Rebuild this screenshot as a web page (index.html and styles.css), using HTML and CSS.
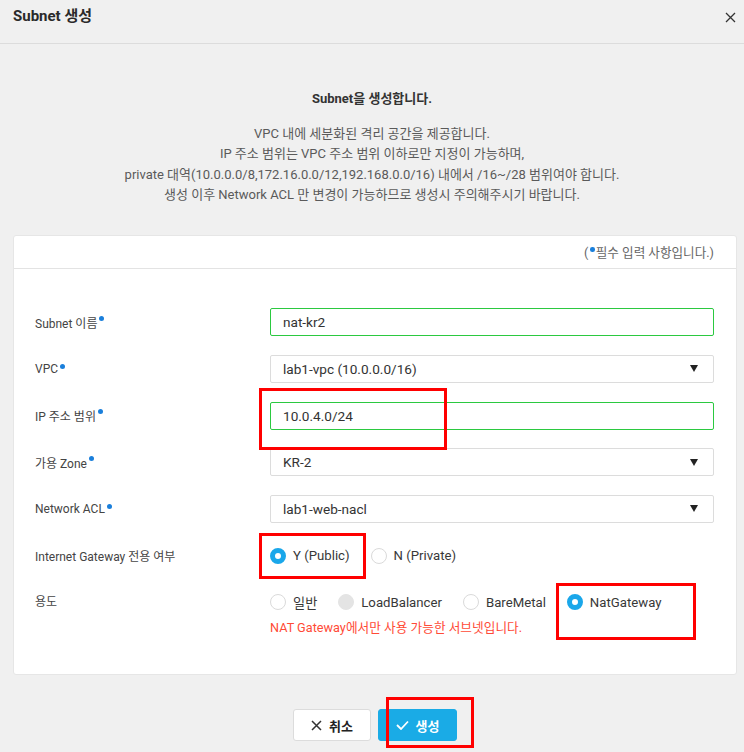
FILE: index.html
```html
<!DOCTYPE html>
<html lang="ko">
<head>
<meta charset="utf-8">
<title>Subnet 생성</title>
<link rel="stylesheet" href="styles.css">
</head>
<body>
<div class="modal">
  <div class="modal-header">
    <h1 class="modal-title">Subnet 생성</h1>
    <button class="close-btn" aria-label="닫기">
      <svg width="11" height="11" viewBox="0 0 11 11"><path d="M1 1L10 10M10 1L1 10" stroke="#333" stroke-width="1.3" fill="none"/></svg>
    </button>
  </div>

  <div class="intro">
    <p class="intro-title">Subnet을 생성합니다.</p>
    <p class="intro-text">VPC 내에 세분화된 격리 공간을 제공합니다.<br>IP 주소 범위는 VPC 주소 범위 이하로만 지정이 가능하며,<br>private 대역(10.0.0.0/8,172.16.0.0/12,192.168.0.0/16) 내에서 /16~/28 범위여야 합니다.<br>생성 이후 Network ACL 만 변경이 가능하므로 생성시 주의해주시기 바랍니다.</p>
  </div>

  <div class="card">
    <div class="card-header">(<span class="req-dot small"></span>필수 입력 사항입니다.)</div>
    <div class="card-body">
      <div class="row">
        <div class="label">Subnet 이름<span class="req-dot"></span></div>
        <div class="field"><div class="input valid">nat-kr2</div></div>
      </div>
      <div class="row">
        <div class="label">VPC<span class="req-dot"></span></div>
        <div class="field"><div class="input select">lab1-vpc (10.0.0.0/16)<span class="arrow"></span></div></div>
      </div>
      <div class="row">
        <div class="label">IP 주소 범위<span class="req-dot"></span></div>
        <div class="field"><div class="input valid">10.0.4.0/24</div></div>
      </div>
      <div class="row">
        <div class="label">가용 Zone<span class="req-dot"></span></div>
        <div class="field"><div class="input select">KR-2<span class="arrow"></span></div></div>
      </div>
      <div class="row">
        <div class="label">Network ACL<span class="req-dot"></span></div>
        <div class="field"><div class="input select">lab1-web-nacl<span class="arrow"></span></div></div>
      </div>
      <div class="row">
        <div class="label">Internet Gateway 전용 여부</div>
        <div class="field radios">
          <span class="opt"><span class="radio checked"></span>Y (Public)</span>
          <span class="opt"><span class="radio"></span>N (Private)</span>
        </div>
      </div>
      <div class="row top">
        <div class="label">용도</div>
        <div class="field">
          <div class="radios">
            <span class="opt"><span class="radio"></span>일반</span>
            <span class="opt"><span class="radio disabled"></span>LoadBalancer</span>
            <span class="opt"><span class="radio"></span>BareMetal</span>
            <span class="opt"><span class="radio checked"></span>NatGateway</span>
          </div>
          <p class="error">NAT Gateway에서만 사용 가능한 서브넷입니다.</p>
        </div>
      </div>
    </div>
  </div>

  <div class="actions">
    <button class="btn btn-cancel"><svg width="11" height="11" viewBox="0 0 11 11"><path d="M1 1L10 10M10 1L1 10" stroke="#333" stroke-width="1.5" fill="none"/></svg>취소</button>
    <button class="btn btn-primary"><svg width="13" height="10" viewBox="0 0 13 10"><path d="M1 5L5 9L12 1.5" stroke="#fff" stroke-width="1.8" fill="none"/></svg>생성</button>
  </div>
</div>

<div class="mark m1"></div>
<div class="mark m2"></div>
<div class="mark m3"></div>
<div class="mark m4"></div>
</body>
</html>
```

FILE: styles.css
```css
* { box-sizing: border-box; }
html, body { margin: 0; padding: 0; }
body {
  width: 744px;
  height: 752px;
  overflow: hidden;
  background: #f0f0f0;
  font-family: Roboto, "Noto Sans CJK KR", sans-serif;
  color: #333;
  position: relative;
}
.modal { display: flex; flex-direction: column; }
.modal-header {
  height: 44px;
  border-bottom: 1px solid #dcdcdc;
  display: flex;
  justify-content: space-between;
  align-items: flex-start;
  padding: 0 8px 0 13px;
}
.modal-title {
  margin: 0;
  font-size: 15px;
  font-weight: 700;
  line-height: 32px;
  color: #2a2a2a;
}
.close-btn {
  border: 0;
  background: none;
  padding: 0;
  width: 11px;
  height: 11px;
  margin: 12px 0 0;
  display: flex;
}
.intro { text-align: center; padding-top: 45px; }
.intro-title {
  margin: 0;
  font-size: 13px;
  font-weight: 700;
  line-height: 20px;
  color: #333;
}
.intro-text {
  margin: 15px 0 0;
  font-size: 13px;
  line-height: 20.3px;
  color: #5a5a5a;
}
.card {
  margin: 30px 7px 0 13px;
  background: #fff;
  border: 1px solid #e6e6e6;
  border-radius: 3px;
}
.card-header {
  height: 33px;
  border-bottom: 1px solid #e3e3e3;
  text-align: right;
  padding: 0 22px;
  font-size: 12.6px;
  line-height: 33px;
  color: #666;
}
.card-body {
  padding: 39px 22px 36px 21px;
  display: flex;
  flex-direction: column;
  gap: 18.7px;
}
.row { display: flex; align-items: center; min-height: 28px; }
.row.top { align-items: flex-start; }
.label {
  width: 235px;
  flex: none;
  font-size: 12px;
  color: #444;
}
.row.top .label { line-height: 28px; }
.req-dot {
  display: inline-block;
  width: 5px;
  height: 5px;
  border-radius: 50%;
  background: #1a7fdb;
  vertical-align: top;
  margin: 2px 0 0 2px;
}
.req-dot.small { margin: 11px 1px 0 2px; width: 4.5px; height: 4.5px; }
.field { flex: 1; }
.input {
  height: 28px;
  border: 1px solid #dcdcdc;
  border-radius: 2px;
  padding: 0 12px;
  font-size: 13.6px;
  line-height: 26px;
  color: #333;
  position: relative;
  display: flex;
  align-items: center;
}
.input.valid { border-color: #2bc940; }
.input.select { justify-content: space-between; }
.arrow {
  width: 0;
  height: 0;
  border-left: 4px solid transparent;
  border-right: 4px solid transparent;
  border-top: 7px solid #222;
  margin-right: 3px;
}
.radios { display: flex; align-items: center; height: 28px; }
.opt {
  display: flex;
  align-items: center;
  gap: 7px;
  font-size: 13.2px;
  color: #383838;
  margin-right: 21px;
}
.radio {
  width: 16px;
  height: 16px;
  border-radius: 50%;
  border: 1px solid #dadada;
  background: #fff;
  flex: none;
}
.radio.checked { border: 5px solid #1aa7ea; }
.radio.disabled { background: #e4e4e4; border-color: #e4e4e4; }
.error {
  margin: 2px 0 0;
  font-size: 12.7px;
  line-height: 20px;
  color: #ff4a36;
}
.actions {
  display: flex;
  justify-content: center;
  gap: 7px;
  margin-top: 34px;
  padding-left: 6px;
}
.btn {
  height: 32px;
  border-radius: 3px;
  font-family: Roboto, "Noto Sans CJK KR", sans-serif;
  font-size: 13px;
  font-weight: 700;
  display: flex;
  align-items: center;
  justify-content: center;
  gap: 7px;
  padding: 0;
}
.btn-cancel {
  width: 78px;
  background: #fff;
  border: 1px solid #dcdcdc;
  color: #222;
}
.btn-primary {
  width: 79px;
  background: #1aabe6;
  border: 1px solid #1aabe6;
  color: #fff;
}
.mark {
  position: absolute;
  border: 3px solid #f00;
}
.m1 { left: 259px; top: 388px; width: 188px; height: 62px; }
.m2 { left: 259px; top: 533px; width: 107px; height: 46px; }
.m3 { left: 556px; top: 583px; width: 140px; height: 57px; }
.m4 { left: 386px; top: 697px; width: 88px; height: 51px; }
```
